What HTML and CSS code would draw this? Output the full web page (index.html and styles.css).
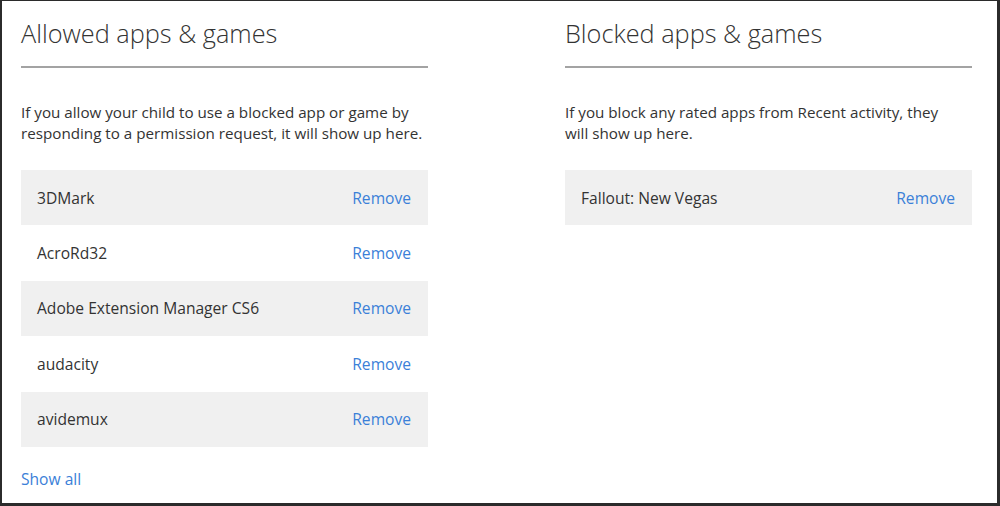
FILE: index.html
```html
<!DOCTYPE html>
<html>
<head>
<meta charset="utf-8">
<link rel="stylesheet" href="styles.css">
</head>
<body>
<div class="frame">
  <section class="panel">
    <h2 class="title">Allowed apps &amp; games</h2>
    <p class="desc">If you allow your child to use a blocked app or game by responding to a permission request, it will show up here.</p>
    <ul class="list">
      <li class="row shaded"><span class="name">3DMark</span><a class="link">Remove</a></li>
      <li class="row"><span class="name">AcroRd32</span><a class="link">Remove</a></li>
      <li class="row shaded"><span class="name">Adobe Extension Manager CS6</span><a class="link">Remove</a></li>
      <li class="row"><span class="name">audacity</span><a class="link">Remove</a></li>
      <li class="row shaded"><span class="name">avidemux</span><a class="link">Remove</a></li>
    </ul>
    <a class="link showall">Show all</a>
  </section>
  <section class="panel">
    <h2 class="title">Blocked apps &amp; games</h2>
    <p class="desc">If you block any rated apps from Recent activity, they<br>will show up here.</p>
    <ul class="list">
      <li class="row shaded"><span class="name">Fallout: New Vegas</span><a class="link">Remove</a></li>
    </ul>
  </section>
</div>
</body>
</html>
```

FILE: styles.css
```css
html, body {
  margin: 0;
  padding: 0;
  background: #fff;
}
.frame {
  box-sizing: border-box;
  width: 1000px;
  height: 506px;
  border-style: solid;
  border-color: #2b2b2b;
  border-width: 1px 3px 3px 2px;
  padding: 0 0 0 19px;
  display: flex;
  gap: 137px;
  font-family: "Open Sans", "Noto Sans", sans-serif;
  color: #333;
}
.panel {
  width: 407px;
  display: flex;
  flex-direction: column;
}
.title {
  margin: 14px 0 0;
  font-size: 25.3px;
  font-weight: 300;
  line-height: 36px;
  color: #333;
  padding-bottom: 15px;
  border-bottom: 2px solid #a3a3a3;
}
.desc {
  margin: 34px 0 0;
  font-size: 15.2px;
  line-height: 21px;
  color: #333;
}
.list {
  list-style: none;
  margin: 26px 0 0;
  padding: 0;
}
.row {
  height: 55.4px;
  display: flex;
  align-items: center;
  justify-content: space-between;
  padding: 0 17px 0 16px;
  font-size: 15.6px;
}
.shaded {
  background: #f0f0f0;
}
.link {
  color: #3b80d8;
  cursor: pointer;
}
.showall {
  margin-top: 21px;
  font-size: 15.6px;
}
```
